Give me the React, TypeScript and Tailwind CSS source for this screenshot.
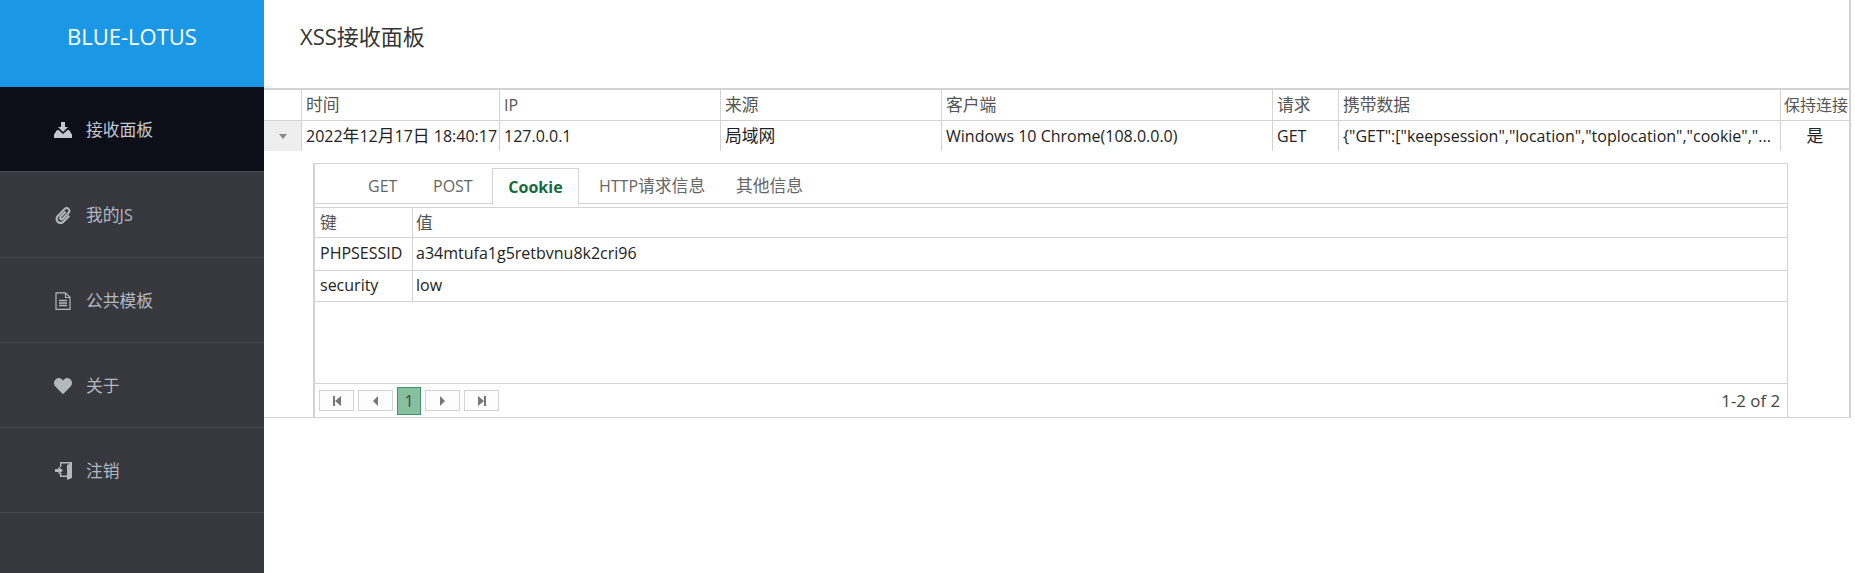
import type { ReactNode } from 'react';
import { FaHeart, FaPaperclip } from 'react-icons/fa';

const font = "font-['Open_Sans','Noto_Sans_CJK_SC',sans-serif]";

const navItems = [
    { label: '接收面板', icon: 'save', active: true },
    { label: '我的JS', icon: 'clip' },
    { label: '公共模板', icon: 'file' },
    { label: '关于', icon: 'heart' },
    { label: '注销', icon: 'door' },
];

// Latin runs sit at 16px, CJK runs at 16.8px
function T({ children }: { children: string }) {
    const parts = children.split(/([\u4e00-\u9fff]+)/);
    return (
        <>
            {parts.map((part, i) => (i % 2 === 1 ? <span key={i} className="text-[16.8px]">{part}</span> : part))}
        </>
    );
}

function NavIcon({ name }: { name: string }) {
    if (name === 'clip') return <FaPaperclip className="w-[16px] h-[17px]" />;
    if (name === 'heart') return <FaHeart className="w-[18px] h-[18px]" />;
    if (name === 'save') {
        return (
            <svg viewBox="0 0 18 16" className="w-[18px] h-[16px]" fill="currentColor">
                <path d="M7 0h4v5h3l-5 5-5-5h3z" />
                <path d="M3 8h1.5L9 12l4.5-4H15l3 4.5V16H0v-3.5z" />
            </svg>
        );
    }
    if (name === 'file') {
        return (
            <svg viewBox="0 0 16 18" className="w-[16px] h-[18px]" fill="none" stroke="currentColor" strokeWidth="1.2">
                <path d="M1 .8h9.5L15 5.3v12H1z" />
                <path d="M10.5 1v4.5H15" />
                <path d="M4 8.5h8M4 11h8M4 13.5h8" strokeWidth="1.6" />
            </svg>
        );
    }
    return (
        <svg viewBox="0 0 17 18" className="w-[17px] h-[18px]" fill="currentColor">
            <path d="M5 0h12v16l-5 2v-3H5v-4h1.4v2.6h5.6V3l3-1.6H6.4V5H5z" />
            <path d="M0 7h3.5V4.5L8 8.5l-4.5 4V10H0z" />
        </svg>
    );
}

const cols = [
    { width: 'w-[198px]', title: '时间', value: '2022年12月17日 18:40:17' },
    { width: 'w-[221px]', title: 'IP', value: '127.0.0.1' },
    { width: 'w-[221px]', title: '来源', value: '局域网' },
    { width: 'w-[331px]', title: '客户端', value: 'Windows 10 Chrome(108.0.0.0)' },
    { width: 'w-[66px]', title: '请求', value: 'GET' },
    { width: 'w-[442px]', title: '携带数据', value: '{"GET":["keepsession","location","toplocation","cookie","...' },
];

function PagerButton({ children }: { children: ReactNode }) {
    return (
        <span className="w-[35px] h-[21px] flex items-center justify-center border border-[#d3d3d3] bg-[#fcfcfc] text-[#777]">
            {children}
        </span>
    );
}

export default function App() {
    return (
        <div className={`${font} flex h-[573px] bg-white text-[16px] text-[#333] overflow-hidden`}>
            <aside className="w-[264px] shrink-0 bg-[#36383e]">
                <div className="h-[87px] bg-[#1a98e6] text-white text-[22px] text-center leading-[72px]">BLUE-LOTUS</div>
                {navItems.map(item => (
                    <div
                        key={item.label}
                        className={`h-[85.25px] flex items-start gap-[14px] pl-[54px] pt-[31px] border-b border-[#4a4b50] ${item.active ? 'bg-[#0c0f17] text-[#c4c7cf]' : 'text-[#b4b7c0]'}`}
                    >
                        <span className="w-[18px] h-[24px] flex items-center justify-center">
                            <NavIcon name={item.icon} />
                        </span>
                        <span className="leading-[24px]"><T>{item.label}</T></span>
                    </div>
                ))}
            </aside>

            <main className="flex-1 min-w-0 pr-[4px]">
                <div className="border-r-2 border-[#d3d3d3]">
                    <div className="h-[88px] pl-[36px] pt-[20px] text-[22px] leading-[32px]">XSS接收面板</div>

                    <div className="border-t-2 border-b border-[#d3d3d3]">
                        <div className="flex h-[31px] border-b border-[#d3d3d3] text-[#555] leading-[30px]">
                            <div className="w-[37px] shrink-0" />
                            {cols.map(col => (
                                <div key={col.title} className={`${col.width} shrink-0 border-l border-[#d3d3d3] pl-[4px]`}><T>{col.title}</T></div>
                            ))}
                            <div className="flex-1 min-w-0 border-l border-[#d3d3d3] pl-[3px] whitespace-nowrap">保持连接</div>
                        </div>
                        <div className="flex h-[30px] text-[#222] leading-[30px]">
                            <div className="w-[37px] shrink-0 bg-[#eeeeee] flex items-center justify-center text-[#888]">
                                <svg viewBox="0 0 8 5" className="w-[8px] h-[5px]" fill="currentColor"><path d="M0 0h8L4 5z" /></svg>
                            </div>
                            {cols.map(col => (
                                <div key={col.title} className={`${col.width} shrink-0 border-l border-[#d3d3d3] pl-[4px] whitespace-nowrap`}><T>{col.value}</T></div>
                            ))}
                            <div className="flex-1 min-w-0 border-l border-[#d3d3d3] text-center"><T>是</T></div>
                        </div>

                        <div className="pl-[49px] pt-[12px]">
                            <div className="w-[1475px] h-[254px] border-t border-l-2 border-r border-[#d3d3d3] flex flex-col">
                                <div className="h-[40px] shrink-0 flex items-end pl-[53px] border-b border-[#d3d3d3] text-[#666]">
                                    <span className="h-[36px] leading-[38px] w-[65px]">GET</span>
                                    <span className="h-[36px] leading-[38px] w-[59px]">POST</span>
                                    <span className="h-[37px] w-[87px] -mb-[2px] border border-b-0 border-[#d3d3d3] bg-white text-center leading-[36px] font-bold text-[#17693b]">Cookie</span>
                                    <span className="h-[36px] leading-[38px] pl-[20px] w-[157px]"><T>HTTP请求信息</T></span>
                                    <span className="h-[36px] leading-[38px]"><T>其他信息</T></span>
                                </div>
                                <div className="mt-[3px] border-t border-[#d3d3d3] flex-1 flex flex-col text-[#222]">
                                    <div className="flex h-[30px] shrink-0 border-b border-[#d3d3d3] leading-[29px] text-[#555]">
                                        <div className="w-[98px] pl-[5px] border-r border-[#d3d3d3]"><T>键</T></div>
                                        <div className="pl-[3px]"><T>值</T></div>
                                    </div>
                                    <div className="flex h-[33px] shrink-0 border-b border-[#d3d3d3] leading-[31px]">
                                        <div className="w-[98px] pl-[5px] border-r border-[#d3d3d3]">PHPSESSID</div>
                                        <div className="pl-[3px]">a34mtufa1g5retbvnu8k2cri96</div>
                                    </div>
                                    <div className="flex h-[31px] shrink-0 border-b border-[#d3d3d3] leading-[29px]">
                                        <div className="w-[98px] pl-[5px] border-r border-[#d3d3d3]">security</div>
                                        <div className="pl-[3px]">low</div>
                                    </div>
                                    <div className="flex-1" />
                                    <div className="h-[34px] shrink-0 border-t border-[#d3d3d3] flex items-center pl-[4px] pr-[7px] gap-[4px] text-[#444]">
                                        <PagerButton>
                                            <svg viewBox="0 0 10 10" className="w-[10px] h-[10px]" fill="currentColor"><path d="M1 0h2v10H1zM9 0v10L3 5z" /></svg>
                                        </PagerButton>
                                        <PagerButton>
                                            <svg viewBox="0 0 5 10" className="w-[5px] h-[10px]" fill="currentColor"><path d="M5 0v10L0 5z" /></svg>
                                        </PagerButton>
                                        <span className="w-[24px] h-[28px] flex items-center justify-center border border-[#3d9466] bg-[#87c09f]">1</span>
                                        <PagerButton>
                                            <svg viewBox="0 0 5 10" className="w-[5px] h-[10px]" fill="currentColor"><path d="M0 0v10l5-5z" /></svg>
                                        </PagerButton>
                                        <PagerButton>
                                            <svg viewBox="0 0 10 10" className="w-[10px] h-[10px]" fill="currentColor"><path d="M1 0v10l6-5zM7 0h2v10H7z" /></svg>
                                        </PagerButton>
                                        <span className="ml-auto text-[16.8px]">1-2 of 2</span>
                                    </div>
                                </div>
                            </div>
                        </div>
                    </div>
                </div>
            </main>
        </div>
    );
}
